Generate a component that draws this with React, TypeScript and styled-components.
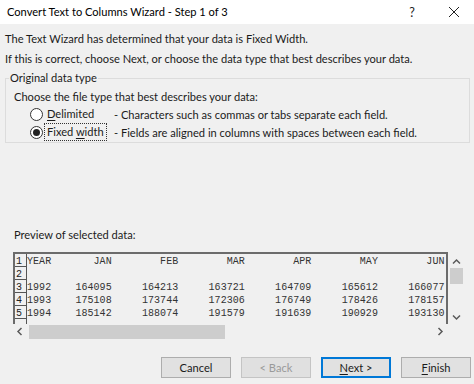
import React from "react";
import styled, { createGlobalStyle } from "styled-components";

const Global = createGlobalStyle`
  html, body { margin: 0; padding: 0; background: #f0f0f0; }
  * { box-sizing: border-box; }
`;

const Window = styled.div`
  width: 474px;
  height: 384px;
  background: #f0f0f0;
  display: flex;
  flex-direction: column;
  overflow: hidden;
  font-family: Lato, "Noto Sans", sans-serif;
  font-size: 11.1px;
  color: #1b1b1b;
`;

const TitleBar = styled.div`
  flex: none;
  height: 24px;
  background: #fff;
  display: flex;
  align-items: center;
  padding: 0 2px 0 7px;
`;

const Title = styled.div`
  flex: 1;
  line-height: 16px;
  color: #000;
`;

const TitleButton = styled.div<{ $w: number }>`
  width: ${(p) => p.$w}px;
  height: 24px;
  display: flex;
  align-items: center;
  justify-content: center;
  color: #222;
  font-size: 12.5px;
  & + & { margin-left: 9px; }
`;

const Body = styled.div`
  flex: 1;
  display: flex;
  flex-direction: column;
  padding: 5px 4px 0 5px;
`;

const Intro = styled.p`
  margin: 0;
  line-height: 20px;
`;

const Group = styled.fieldset`
  margin: 1px 0 0 0;
  padding: 0 0 1px 8px;
  border: 1px solid #dcdcdc;
  min-width: 0;
`;

const Legend = styled.legend`
  margin-left: -5px;
  padding: 0 1px;
  line-height: 16px;
`;

const Prompt = styled.div`
  margin-top: 3px;
  line-height: 16px;
`;

const RadioRow = styled.div`
  display: grid;
  grid-template-columns: 13px 71px auto;
  align-items: center;
  height: 18px;
  margin-left: 16px;
`;

const RadioCircle = styled.span<{ $checked?: boolean }>`
  width: 13px;
  height: 13px;
  border-radius: 50%;
  border: 1px solid #333;
  background: #fff;
  display: flex;
  align-items: center;
  justify-content: center;
  &::after {
    content: "";
    width: 7px;
    height: 7px;
    border-radius: 50%;
    background: ${(p) => (p.$checked ? "#222" : "transparent")};
  }
`;

const RadioLabel = styled.span<{ $focused?: boolean }>`
  justify-self: start;
  margin-left: 3px;
  padding: 0 1px;
  line-height: 14px;
  outline: ${(p) => (p.$focused ? "1px dotted #333" : "none")};
  outline-offset: 1px;
`;

const Key = styled.span`
  text-decoration: underline;
  text-underline-offset: 2px;
`;

const Description = styled.span`
  white-space: nowrap;
`;

const PreviewLabel = styled.div`
  margin: 84px 0 0 9px;
  line-height: 16px;
`;

const Preview = styled.div`
  margin: 9px 0 0 8px;
  width: 450px;
  display: grid;
  grid-template-columns: 435px 15px;
  grid-template-rows: 72px 15px;
`;

const DataPane = styled.div`
  border: 2px solid #6b6b6b;
  border-bottom: none;
  overflow: hidden;
  background: #f0f0f0;
`;

const DataRow = styled.div`
  display: flex;
  height: 13px;
`;

const RowNumber = styled.div`
  flex: none;
  width: 12px;
  border-right: 1px solid #555;
  border-bottom: 1px solid #555;
  padding: 4px 0 0 1px;
  font-family: "Liberation Mono", monospace;
  font-size: 10px;
  line-height: 8px;
  color: #222;
`;

const DataLine = styled.pre`
  margin: 0;
  padding: 4px 0 0 0;
  font-family: "Liberation Mono", monospace;
  font-size: 10px;
  letter-spacing: 0.05px;
  line-height: 8px;
  color: #333;
  white-space: pre;
`;

const VScroll = styled.div`
  display: flex;
  flex-direction: column;
  align-items: center;
  padding: 4px 0 1px 1px;
`;

const ArrowBox = styled.div<{ $w?: number; $h?: number }>`
  flex: none;
  width: ${(p) => p.$w ?? 15}px;
  height: ${(p) => p.$h ?? 12}px;
  display: flex;
  align-items: center;
  justify-content: center;
`;

const VThumb = styled.div`
  width: 13px;
  height: 16px;
  background: #cdcdcd;
`;

const Spacer = styled.div`
  flex: 1;
`;

const HScroll = styled.div`
  display: flex;
  align-items: center;
`;

const HThumb = styled.div`
  width: 196px;
  height: 14px;
  margin-left: 1px;
  background: #cdcdcd;
`;

const Buttons = styled.div`
  display: flex;
  justify-content: flex-end;
  gap: 10px;
  margin: 18px -1px 0 0;
`;

const Button = styled.button<{ $primary?: boolean }>`
  width: 70px;
  height: 21px;
  padding: 0;
  font-family: Lato, "Noto Sans", sans-serif;
  font-size: 11.1px;
  color: #1b1b1b;
  background: #e1e1e1;
  border: ${(p) => (p.$primary ? "2px solid #0078d7" : "1px solid #adadad")};
  &:disabled {
    color: #9a9a9a;
    background: #e0e0e0;
    border-color: #c4c4c4;
  }
`;

const Chevron = ({ dir }: { dir: "up" | "down" | "left" | "right" }) => {
  const pts = {
    up: "1,5.5 4.5,2 8,5.5",
    down: "1,2.5 4.5,6 8,2.5",
    left: "5.5,1 2,4.5 5.5,8",
    right: "2.5,1 6,4.5 2.5,8",
  }[dir];
  return (
    <svg width="9" height="9" viewBox="0 0 9 9">
      <polyline points={pts} fill="none" stroke="#5a5a5a" strokeWidth="1.5" />
    </svg>
  );
};

const CloseIcon = () => (
  <svg width="12" height="12" viewBox="0 0 12 12">
    <path d="M1 1 L11 11 M11 1 L1 11" stroke="#222" strokeWidth="1" />
  </svg>
);

const header = ["YEAR", "JAN", "FEB", "MAR", "APR", "MAY", "JUN"];
const data: string[][] = [
  header,
  [],
  ["1992", "164095", "164213", "163721", "164709", "165612", "166077"],
  ["1993", "175108", "173744", "172306", "176749", "178426", "178157"],
  ["1994", "185142", "188074", "191579", "191639", "190929", "193130"],
  [],
];

const formatLine = (cells: string[]) => {
  if (cells.length === 0) return "";
  const [first, ...rest] = cells;
  let line = first.padEnd(4, " ");
  rest.forEach((c, i) => {
    line += c.padStart(i === 0 ? 10 : 11, " ");
  });
  return line;
};

export default function App() {
  return (
    <>
      <Global />
      <Window>
        <TitleBar>
          <Title>Convert Text to Columns Wizard - Step 1 of 3</Title>
          <TitleButton $w={30}>?</TitleButton>
          <TitleButton $w={36}>
            <CloseIcon />
          </TitleButton>
        </TitleBar>
        <Body>
          <Intro>The Text Wizard has determined that your data is Fixed Width.</Intro>
          <Intro>If this is correct, choose Next, or choose the data type that best describes your data.</Intro>
          <Group>
            <Legend>Original data type</Legend>
            <Prompt>Choose the file type that best describes your data:</Prompt>
            <RadioRow>
              <RadioCircle />
              <RadioLabel>
                <Key>D</Key>elimited
              </RadioLabel>
              <Description>- Characters such as commas or tabs separate each field.</Description>
            </RadioRow>
            <RadioRow>
              <RadioCircle $checked />
              <RadioLabel $focused>
                Fixed <Key>w</Key>idth
              </RadioLabel>
              <Description>- Fields are aligned in columns with spaces between each field.</Description>
            </RadioRow>
          </Group>
          <PreviewLabel>Preview of selected data:</PreviewLabel>
          <Preview>
            <DataPane>
              {data.map((cells, i) => (
                <DataRow key={i}>
                  <RowNumber>{i < 5 ? i + 1 : ""}</RowNumber>
                  <DataLine>{formatLine(cells)}</DataLine>
                </DataRow>
              ))}
            </DataPane>
            <VScroll>
              <ArrowBox $w={13}>
                <Chevron dir="up" />
              </ArrowBox>
              <VThumb />
              <Spacer />
              <ArrowBox $w={13}>
                <Chevron dir="down" />
              </ArrowBox>
            </VScroll>
            <HScroll>
              <ArrowBox $h={15}>
                <Chevron dir="left" />
              </ArrowBox>
              <HThumb />
              <Spacer />
              <ArrowBox $h={15}>
                <Chevron dir="right" />
              </ArrowBox>
            </HScroll>
          </Preview>
          <Buttons>
            <Button>Cancel</Button>
            <Button disabled>&lt; Back</Button>
            <Button $primary>
              <Key>N</Key>ext &gt;
            </Button>
            <Button>
              <Key>F</Key>inish
            </Button>
          </Buttons>
        </Body>
      </Window>
    </>
  );
}
